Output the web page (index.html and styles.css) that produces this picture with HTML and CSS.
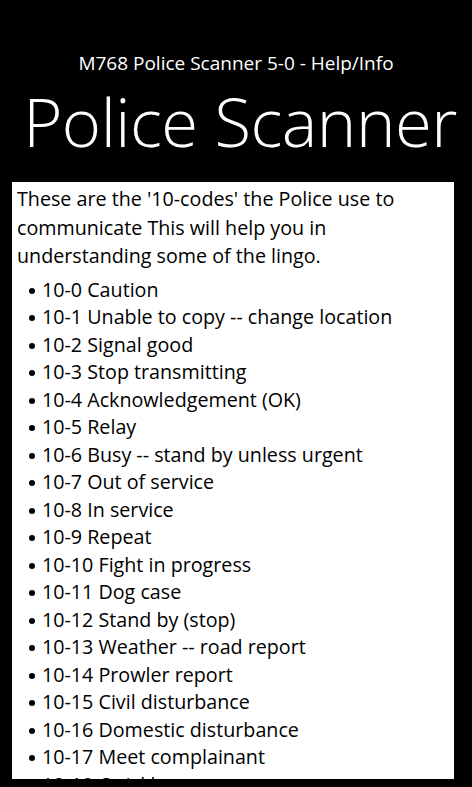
FILE: index.html
```html
<!DOCTYPE html>
<html lang="en">
<head>
    <meta charset="UTF-8">
    <meta name="viewport" content="width=device-width, initial-scale=1.0">
    <title>M768 Police Scanner 5-0 - Help/Info</title>
    <link rel="stylesheet" href="styles.css">
</head>
<body>
    <div class="header">
        <p class="app-title">M768 Police Scanner 5-0 - Help/Info</p>
        <h1 class="page-title">Police Scanner</h1>
    </div>

    <div class="info-box">
        <p class="intro">These are the '10-codes' the Police use to communicate This will help you in understanding some of the lingo.</p>
        <ul class="codes">
            <li>10-0 Caution</li>
            <li>10-1 Unable to copy -- change location</li>
            <li>10-2 Signal good</li>
            <li>10-3 Stop transmitting</li>
            <li>10-4 Acknowledgement (OK)</li>
            <li>10-5 Relay</li>
            <li>10-6 Busy -- stand by unless urgent</li>
            <li>10-7 Out of service</li>
            <li>10-8 In service</li>
            <li>10-9 Repeat</li>
            <li>10-10 Fight in progress</li>
            <li>10-11 Dog case</li>
            <li>10-12 Stand by (stop)</li>
            <li>10-13 Weather -- road report</li>
            <li>10-14 Prowler report</li>
            <li>10-15 Civil disturbance</li>
            <li>10-16 Domestic disturbance</li>
            <li>10-17 Meet complainant</li>
            <li>10-18 Quickly</li>
            <li>10-19 Return to station</li>
        </ul>
    </div>
</body>
</html>
```

FILE: styles.css
```css
html, body {
    height: 100%;
}
body {
    margin: 0;
    background-color: #000;
    font-family: "Open Sans", sans-serif;
    overflow: hidden;
    display: flex;
    flex-direction: column;
}
.header {
    color: #fff;
    text-align: center;
}
.app-title {
    font-size: 19px;
    margin: 50px 0 0 0;
    line-height: 26px;
}
.page-title {
    font-weight: 300;
    font-size: 67px;
    margin: 0;
    padding-left: 8px;
    line-height: 90px;
    letter-spacing: -0.5px;
}
.info-box {
    background-color: #fff;
    color: #000;
    margin: 16px 18px 8px 12px;
    padding: 3px 5px;
    flex: 1;
    overflow: hidden;
    font-size: 19.7px;
}
.intro {
    margin: 0 0 5px 0;
    line-height: 28.5px;
}
.codes {
    margin: 0;
    padding-left: 12px;
    list-style: none;
    line-height: 27.5px;
}
.codes li::before {
    content: "";
    display: inline-block;
    width: 6px;
    height: 6px;
    border-radius: 50%;
    background-color: #000;
    margin-right: 7px;
    vertical-align: 3px;
}
```
